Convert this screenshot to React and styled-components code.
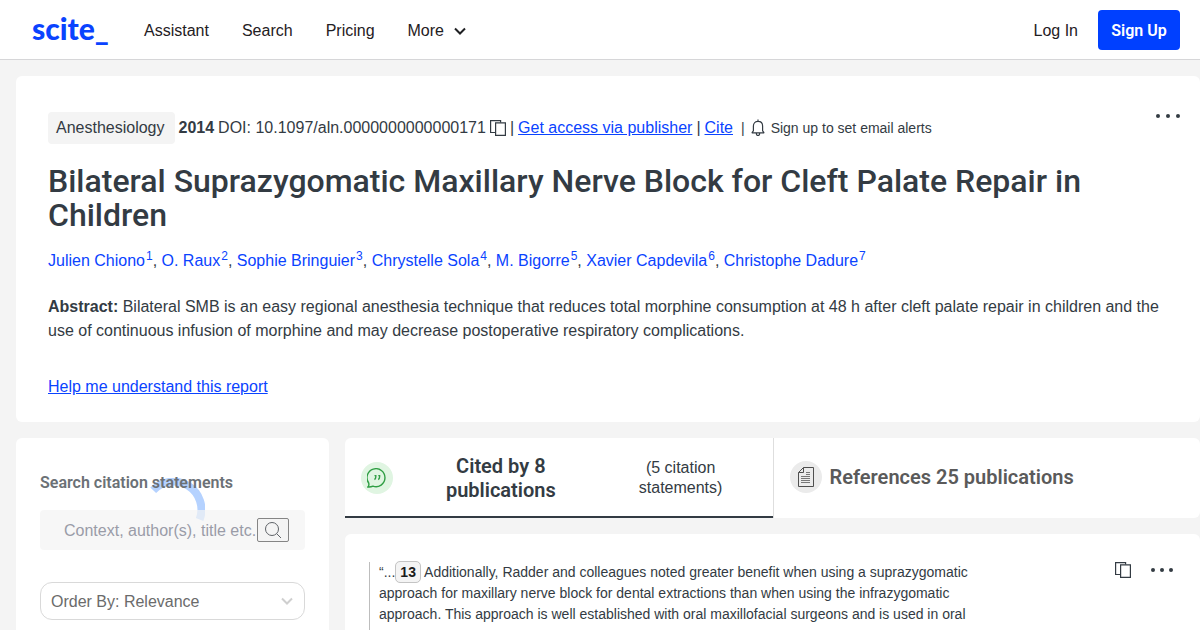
import React from "react";
import styled, { createGlobalStyle } from "styled-components";

const headingFont = `Roboto, "Liberation Sans", Arial, sans-serif`;

const GlobalStyle = createGlobalStyle`
  *, *::before, *::after { box-sizing: border-box; }
  body {
    margin: 0;
    background: #f4f4f4;
    color: #333b43;
    font: 400 16px/24px "Liberation Sans", Arial, sans-serif;
  }
  button { font: inherit; color: inherit; border: 0; padding: 0; background: none; cursor: pointer; }
`;

const NavBar = styled.header`
  display: flex;
  align-items: center;
  justify-content: space-between;
  height: 60px;
  padding: 0 20px 0 32px;
  background: #fff;
  border-bottom: 1px solid #d6d6d8;
  color: #1f2023;
`;

const NavGroup = styled.nav`
  display: flex;
  align-items: center;
  gap: ${(p) => p.$gap}px;
`;

const Logo = styled.a`
  min-width: 79px;
  padding-bottom: 4px;
  color: #0a43ff;
  font: 900 30px/32px Lato, sans-serif;
  text-decoration: none;
`;

const NavLink = styled.a`
  padding-top: 2px;
  color: inherit;
  text-decoration: none;
`;

const MoreButton = styled.button`
  display: flex;
  align-items: center;
  gap: 10px;
  padding-top: 2px;
`;

const SignUp = styled.button`
  min-width: 82px;
  height: 40px;
  padding: 2px 12px 0;
  border-radius: 4px;
  background: #0040ff;
  color: #fff;
  font-family: ${headingFont};
  font-weight: 600;
`;

const Page = styled.main`
  display: grid;
  grid-template-columns: 313px minmax(0, 1fr);
  gap: 16px;
  padding: 16px 0 16px 16px;
`;

const Card = styled.section`
  background: #fff;
  border-radius: 6px;
`;

const Report = styled(Card)`
  grid-column: 1 / -1;
  padding: 36px 20px 23px 32px;
`;

const MetaRow = styled.div`
  display: flex;
  align-items: flex-start;
  justify-content: space-between;
`;

const Meta = styled.div`
  display: flex;
  align-items: center;
  gap: 4px;
  line-height: 32px;
  white-space: nowrap;
`;

const Journal = styled.span`
  padding: 0 10px 0 8px;
  border-radius: 4px;
  background: #f4f4f4;
`;

const TextLink = styled.a`
  color: #0a43ff;
  text-decoration: underline;
`;

const IconButton = styled.button`
  display: flex;
  align-items: center;
`;

const Alerts = styled.button`
  display: flex;
  align-items: center;
  gap: 6px;
  margin-left: 4px;
  font-size: 14px;
`;

const Title = styled.h1`
  margin: 20px 0 0;
  font-family: ${headingFont};
  font-size: 32px;
  font-weight: 500;
  line-height: 34px;
`;

const Authors = styled.p`
  margin: 17px 0 0;
`;

const Author = styled.a`
  color: #0a43ff;
  text-decoration: none;
  sup { margin-left: 1px; font-size: 12px; line-height: 0; }
`;

const Abstract = styled.p`
  margin: 22px 0 32px;
`;

const Sidebar = styled(Card)`
  position: relative;
  isolation: isolate;
  display: flex;
  flex-direction: column;
  padding: 33px 24px 32px;
`;

const Spinner = styled.svg`
  position: absolute;
  z-index: -1;
  top: 40px;
  left: calc(50% - 32px);
`;

const SearchLabel = styled.label`
  color: #6b7176;
  font-family: ${headingFont};
  font-weight: 600;
`;

const SearchBox = styled.div`
  display: flex;
  align-items: center;
  height: 40px;
  margin: 15px 0 32px;
  padding: 0 16px 0 24px;
  border-radius: 4px;
  background: rgba(244, 244, 244, 0.7);
`;

const SearchInput = styled.input`
  flex: 1;
  min-width: 0;
  padding: 2px 0 0;
  border: 0;
  outline: 0;
  background: none;
  font: inherit;
  &::placeholder { color: #9a9ca8; opacity: 1; }
`;

const SearchButton = styled.button`
  display: grid;
  place-items: center;
  width: 32px;
  height: 24px;
  border: 1px solid #858585;
  border-radius: 2px;
  background: #f4f4f4;
`;

const SelectWrap = styled.div`
  position: relative;
  svg { position: absolute; right: 12px; top: 15px; pointer-events: none; }
`;

const Select = styled.select`
  appearance: none;
  width: 100%;
  height: 38px;
  padding: 2px 32px 0 10px;
  border: 1px solid #d9d9d9;
  border-radius: 12px;
  background: #fff;
  color: #6b6b6b;
  font: inherit;
`;

const Column = styled.div`
  display: flex;
  flex-direction: column;
  gap: 16px;
`;

const Tabs = styled(Card)`
  display: grid;
  grid-template-columns: 1fr 1fr;
  height: 80px;
  border-bottom-left-radius: 0;
`;

const CitedTab = styled.button`
  display: grid;
  grid-template-columns: 32px 3fr 2fr;
  align-items: center;
  padding: 2px 20px 0 16px;
  border-bottom: 2px solid #333b43;
`;

const ReferencesTab = styled.button`
  display: flex;
  align-items: center;
  gap: 8px;
  padding: 0 16px 2px;
  border-left: 1px solid #dedede;
  color: #5a5a5a;
`;

const TabIcon = styled.span`
  display: grid;
  place-items: center;
  width: 32px;
  height: 32px;
  border-radius: 50%;
  background: ${(p) => p.$tint};
`;

const TabTitle = styled.span`
  padding: 0 ${(p) => p.$inset || 0}px;
  font-family: ${headingFont};
  font-size: 20px;
  font-weight: 600;
`;

const TabNote = styled.span`
  padding: 0 24px;
  line-height: 20px;
`;

const Citation = styled(Card)`
  display: flex;
  align-items: flex-start;
  justify-content: space-between;
  padding: 28px 27px 24px 24px;
`;

const Quote = styled.blockquote`
  max-width: 620px;
  margin: 0;
  padding: 0 0 24px 9px;
  border-left: 1px solid #bdbdbd;
  font-size: 14px;
  line-height: 21px;
`;

const RefNumber = styled.span`
  padding: 2px 4px;
  border: 1px solid #c4c4c4;
  border-radius: 5px;
  background: #f4f4f4;
  color: #1b1b1b;
  font-weight: 700;
`;

const Actions = styled.div`
  display: flex;
  align-items: center;
  gap: 20px;
`;

const CopyIcon = () => (
  <svg width="16" height="16" viewBox="0 0 16 16" fill="none" stroke="currentColor" strokeWidth="1.2">
    <path d="M5 12.500H.6V.6h10V2.500" />
    <path d="M5.600 2.900h9.800v12.500H5.600z" />
  </svg>
);

const DotsIcon = ({ width = 24 }) => (
  <svg width={width} height="8" viewBox={`0 0 ${width} 8`} fill="currentColor">
    <circle cx="2" cy="4" r="2" />
    <circle cx={width / 2} cy="4" r="2" />
    <circle cx={width - 2} cy="4" r="2" />
  </svg>
);

const ChevronIcon = ({ color = "currentColor", width = 2 }) => (
  <svg width="12" height="8" viewBox="0 0 12 8" fill="none" stroke={color} strokeWidth={width}>
    <path d="M1 1.5l5 5 5-5" />
  </svg>
);

const BellIcon = () => (
  <svg width="14" height="18" viewBox="0 0 14 18" fill="none" stroke="currentColor" strokeWidth="1.2">
    <path d="M7 .5v2M.8 13.800h12.400M.8 13.800l1.600-2V7C2.400 4.200 4.400 2.400 7 2.400s4.600 1.800 4.600 4.600v4.800l1.600 2M5.300 14c0 1.800.7 2.500 1.700 2.500s1.700-.7 1.700-2.500" />
  </svg>
);

const SearchIcon = () => (
  <svg width="18" height="18" viewBox="0 0 18 18" fill="none" stroke="#5f6368" strokeWidth="1">
    <circle cx="8" cy="8" r="6.5" />
    <path d="M12.7 12.7l4.3 4.3" />
  </svg>
);

const QuoteBubbleIcon = () => (
  <svg width="20" height="20" viewBox="0 0 20 20" fill="none" stroke="#2f9e44" strokeWidth="1.4">
    <path d="M.8 19c1-.8 1.300-2.400.9-4A9 9 0 1 1 6 18.200c-1.500.7-3.500 1-5.200.8z" />
    <path d="M7.500 7.600h1.300v1.200c0 1.400-.5 2.200-1.300 2.800M11.300 7.600h1.300v1.200c0 1.400-.5 2.200-1.300 2.800" />
  </svg>
);

const DocumentIcon = () => (
  <svg width="16" height="20" viewBox="0 0 16 20" fill="none" stroke="#4f4f4f">
    <path d="M5.500.5h10v19H.5v-14zM5.500.5v5h-5" />
    <path d="M8 5.500h4M8 7.500h4M3 9.500h9M3 11.500h9M3 13.500h9M3 15.500h9" stroke="#777" />
  </svg>
);

const authors = ["Julien Chiono", "O. Raux", "Sophie Bringuier", "Chrystelle Sola", "M. Bigorre", "Xavier Capdevila", "Christophe Dadure"];

export default function App() {
  return (
    <>
      <GlobalStyle />
      <NavBar>
        <NavGroup $gap={33}>
          <Logo href="#">scite_</Logo>
          <NavLink href="#">Assistant</NavLink>
          <NavLink href="#">Search</NavLink>
          <NavLink href="#">Pricing</NavLink>
          <MoreButton>More <ChevronIcon /></MoreButton>
        </NavGroup>
        <NavGroup $gap={20}>
          <NavLink href="#">Log In</NavLink>
          <SignUp>Sign Up</SignUp>
        </NavGroup>
      </NavBar>
      <Page>
        <Report>
          <MetaRow>
            <Meta>
              <Journal>Anesthesiology</Journal>
              <strong>2014</strong>
              <span>DOI: 10.1097/aln.0000000000000171</span>
              <IconButton aria-label="Copy DOI"><CopyIcon /></IconButton>
              <span>|</span>
              <TextLink href="#">Get access via publisher</TextLink>
              <span>|</span>
              <TextLink href="#">Cite</TextLink>
              <Alerts><span>|</span><BellIcon />Sign up to set email alerts</Alerts>
            </Meta>
            <IconButton aria-label="More options"><DotsIcon /></IconButton>
          </MetaRow>
          <Title>Bilateral Suprazygomatic Maxillary Nerve Block for Cleft Palate Repair in Children</Title>
          <Authors>
            {authors.map((name, i) => (
              <React.Fragment key={name}>
                {i > 0 && ", "}
                <Author href="#">{name}<sup>{i + 1}</sup></Author>
              </React.Fragment>
            ))}
          </Authors>
          <Abstract>
            <strong>Abstract:</strong> Bilateral SMB is an easy regional anesthesia technique that reduces total morphine consumption at 48 h after cleft palate repair in children and the use of continuous infusion of morphine and may decrease postoperative respiratory complications.
          </Abstract>
          <TextLink href="#">Help me understand this report</TextLink>
        </Report>
        <Sidebar as="aside">
          <Spinner width="64" height="64" viewBox="0 0 64 64" fill="none" stroke="#b5d2ff" strokeWidth="8">
            <path d="M12.200 12.200A28 28 0 0 1 58.600 41.500" />
          </Spinner>
          <SearchLabel htmlFor="statement-search">Search citation statements</SearchLabel>
          <SearchBox>
            <SearchInput id="statement-search" placeholder="Context, author(s), title etc." />
            <SearchButton aria-label="Search"><SearchIcon /></SearchButton>
          </SearchBox>
          <SelectWrap>
            <Select aria-label="Order by" defaultValue="relevance">
              <option value="relevance">Order By: Relevance</option>
            </Select>
            <ChevronIcon color="#cfcfcf" />
          </SelectWrap>
        </Sidebar>
        <Column>
          <Tabs as="div">
            <CitedTab>
              <TabIcon $tint="#e0f5e2"><QuoteBubbleIcon /></TabIcon>
              <TabTitle $inset={32}>Cited by 8 publications</TabTitle>
              <TabNote>(5 citation statements)</TabNote>
            </CitedTab>
            <ReferencesTab>
              <TabIcon $tint="#ebebeb"><DocumentIcon /></TabIcon>
              <TabTitle>References 25 publications</TabTitle>
            </ReferencesTab>
          </Tabs>
          <Citation as="article">
            <Quote>
              “...<RefNumber>13</RefNumber> Additionally, Radder and colleagues noted greater benefit when using a suprazygomatic approach for maxillary nerve block for dental extractions than when using the infrazygomatic approach. This approach is well established with oral maxillofacial surgeons and is used in oral
            </Quote>
            <Actions>
              <IconButton aria-label="Copy citation"><CopyIcon /></IconButton>
              <IconButton aria-label="More options"><DotsIcon width={22} /></IconButton>
            </Actions>
          </Citation>
        </Column>
      </Page>
    </>
  );
}
